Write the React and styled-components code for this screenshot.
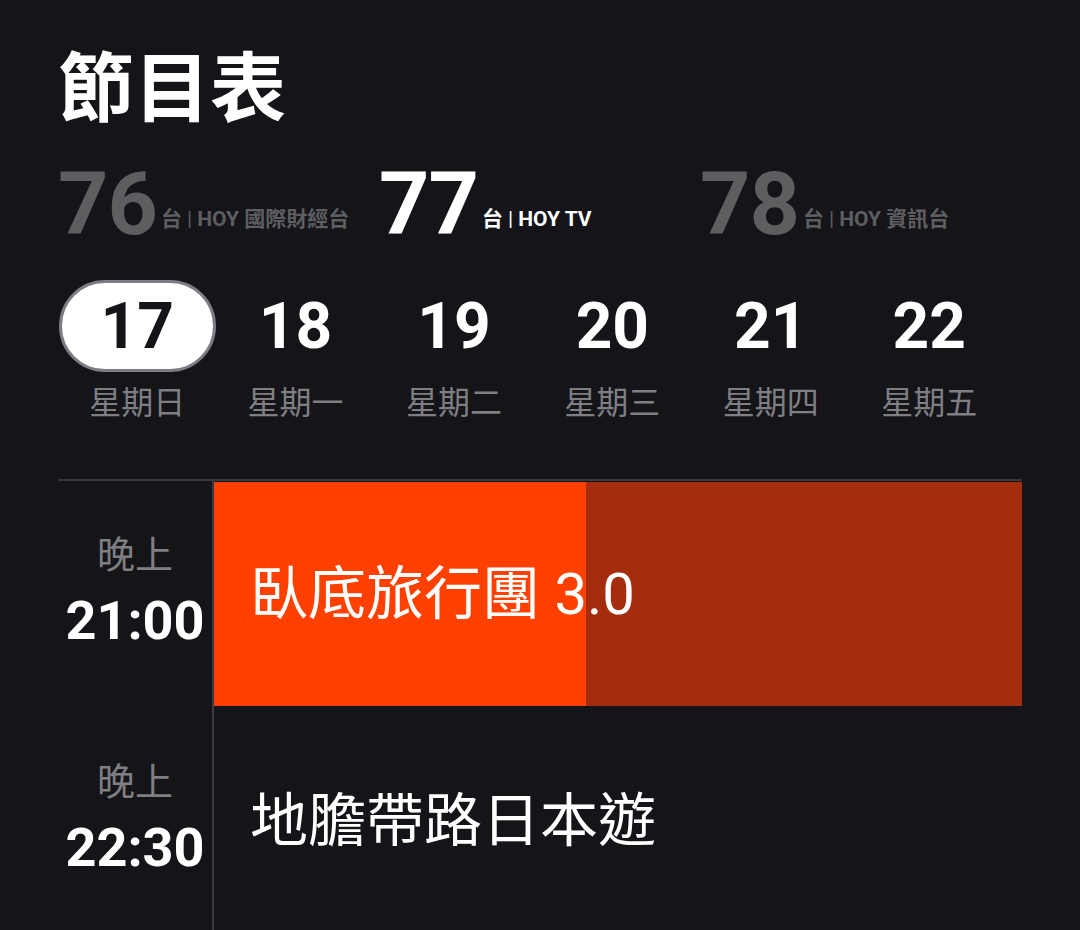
import React from "react";
import styled, { createGlobalStyle } from "styled-components";

const channels = [
  { num: "76", name: "HOY 國際財經台", active: false },
  { num: "77", name: "HOY TV", active: true },
  { num: "78", name: "HOY 資訊台", active: false },
];

const days = [
  { date: "17", label: "星期日", selected: true },
  { date: "18", label: "星期一" },
  { date: "19", label: "星期二" },
  { date: "20", label: "星期三" },
  { date: "21", label: "星期四" },
  { date: "22", label: "星期五" },
];

const programs = [
  { period: "晚上", time: "21:00", title: "臥底旅行團 3.0", live: true, progress: 46 },
  { period: "晚上", time: "22:30", title: "地膽帶路日本遊" },
];

export default function App() {
  return (
    <>
      <Global />
      <Page>
        <Title>節目表</Title>
        <ChannelRow>
          {channels.map((ch) => (
            <Channel key={ch.num} active={ch.active}>
              <ChannelNum>{ch.num}</ChannelNum>
              <ChannelLabel>
                台<Bar>|</Bar>
                {ch.name}
              </ChannelLabel>
            </Channel>
          ))}
        </ChannelRow>
        <DateRow>
          {days.map((d) => (
            <DateItem key={d.date}>
              <DayNum selected={d.selected}>{d.date}</DayNum>
              <DayLabel>{d.label}</DayLabel>
            </DateItem>
          ))}
        </DateRow>
        <Schedule>
          {programs.map((p) => (
            <Row key={p.time}>
              <TimeCell>
                <Period>{p.period}</Period>
                <Time>{p.time}</Time>
              </TimeCell>
              <ProgramCell live={p.live}>
                {p.live && <Progress style={{ width: `${p.progress}%` }} />}
                <ProgramTitle>{p.title}</ProgramTitle>
              </ProgramCell>
            </Row>
          ))}
        </Schedule>
      </Page>
    </>
  );
}

const Global = createGlobalStyle`
  html, body {
    margin: 0;
    padding: 0;
    background: #141419;
    overflow: hidden;
  }
  body {
    font-family: "Roboto", "Noto Sans CJK TC", sans-serif;
    color: #ffffff;
  }
`;

const Page = styled.div`
  width: 1080px;
  height: 930px;
  padding: 0 58px;
  box-sizing: border-box;
  overflow: hidden;
`;

const Title = styled.h1`
  margin: 0;
  padding-top: 38px;
  font-family: "Noto Sans CJK TC", sans-serif;
  font-size: 76px;
  font-weight: 700;
  line-height: 90px;
`;

const ChannelRow = styled.div`
  display: flex;
  margin-top: 36px;
`;

const Channel = styled.div`
  width: 321px;
  display: flex;
  align-items: flex-end;
  color: ${(p) => (p.active ? "#ffffff" : "#5e5e60")};
`;

const ChannelNum = styled.div`
  font-family: "Roboto", sans-serif;
  font-size: 88px;
  font-weight: 700;
  line-height: 80px;
  letter-spacing: -1px;
`;

const ChannelLabel = styled.div`
  font-family: "Roboto", "Noto Sans CJK TC", sans-serif;
  font-size: 21px;
  font-weight: 700;
  line-height: 24px;
  margin-left: 4px;
  margin-bottom: 13px;
  white-space: nowrap;
`;

const Bar = styled.span`
  font-weight: 400;
  margin: 0 5px;
`;

const DateRow = styled.div`
  display: grid;
  grid-template-columns: repeat(6, 158.4px);
  margin-top: 36px;
`;

const DateItem = styled.div`
  display: flex;
  flex-direction: column;
  align-items: center;
`;

const DayNum = styled.div`
  width: 157px;
  height: 92px;
  box-sizing: border-box;
  border-radius: 46px;
  display: flex;
  align-items: center;
  justify-content: center;
  font-family: "Roboto", sans-serif;
  font-size: 64px;
  font-weight: 700;
  background: ${(p) => (p.selected ? "#ffffff" : "transparent")};
  color: ${(p) => (p.selected ? "#141419" : "#ffffff")};
  border: 3px solid ${(p) => (p.selected ? "#7d7c84" : "transparent")};
`;

const DayLabel = styled.div`
  font-family: "Noto Sans CJK TC", sans-serif;
  font-size: 32px;
  line-height: 40px;
  color: #7f7f82;
  margin-top: 8px;
`;

const Schedule = styled.div`
  width: 964px;
  margin-top: 59px;
  border-top: 2px solid #3a3940;
`;

const Row = styled.div`
  display: grid;
  grid-template-columns: 156px 1fr;
  height: 227px;
`;

const TimeCell = styled.div`
  display: flex;
  flex-direction: column;
  align-items: center;
  justify-content: center;
  border-right: 2px solid #3a3940;
  padding-bottom: 8px;
`;

const Period = styled.div`
  font-family: "Noto Sans CJK TC", sans-serif;
  font-size: 38px;
  line-height: 44px;
  color: #7f7f82;
`;

const Time = styled.div`
  font-family: "Roboto", sans-serif;
  font-size: 54px;
  font-weight: 700;
  line-height: 62px;
  margin-top: 16px;
`;

const ProgramCell = styled.div`
  position: relative;
  display: flex;
  align-items: center;
  padding-left: 36px;
  background: ${(p) => (p.live ? "#a32d0c" : "transparent")};
  margin-bottom: 2px;
  margin-top: ${(p) => (p.live ? "1px" : "0")};
  overflow: hidden;
`;

const Progress = styled.div`
  position: absolute;
  left: 0;
  top: 0;
  bottom: 0;
  background: #ff4000;
`;

const ProgramTitle = styled.div`
  position: relative;
  font-family: "Roboto", "Noto Sans CJK TC", sans-serif;
  font-size: 58px;
  line-height: 70px;
  color: #ffffff;
  white-space: nowrap;
`;
